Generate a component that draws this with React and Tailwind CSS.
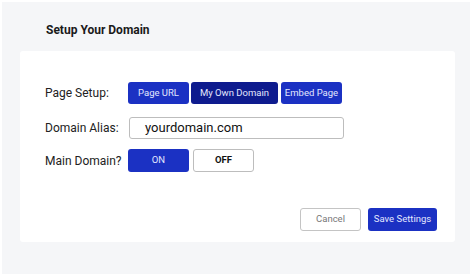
export default function App() {
  return (
    <div className="w-[474px] h-[276px] bg-white p-[2px] font-['Roboto',sans-serif]">
      <div className="w-[468px] h-[272px] bg-[#f5f6f8] pt-[20px] pl-[18px] pr-[15px]">
        <h1 className="pl-[26px] text-[12px] font-bold text-[#1a1a1a] leading-[16px]">Setup Your Domain</h1>
        <div className="mt-[13px] h-[191px] w-[435px] bg-white rounded-[3px] pl-[25px] pr-[18px] pt-[31px] flex flex-col">
          <div className="flex items-center h-[22px]">
            <span className="w-[83px] whitespace-nowrap text-[12px] text-[#222]">Page Setup:</span>
            <div className="flex gap-[2px]">
              <button className="w-[61px] h-[22px] rounded-[3px] bg-[#1b31c3] text-[#e3e7ff] text-[9.5px]">Page URL</button>
              <button className="w-[87px] h-[22px] rounded-[3px] bg-[#0e1b8e] text-[#e3e7ff] text-[9.5px]">My Own Domain</button>
              <button className="ml-[1px] w-[61px] h-[22px] rounded-[3px] bg-[#1b31c3] text-[#e3e7ff] text-[9.5px]">Embed Page</button>
            </div>
          </div>
          <div className="flex items-center h-[22px] mt-[13px]">
            <span className="w-[84px] whitespace-nowrap text-[12px] text-[#222]">Domain Alias:</span>
            <div className="w-[215px] h-[22px] border border-[#bdbdbd] rounded-[3px] pl-[15px] flex items-center text-[13px] text-[#111]">yourdomain.com</div>
          </div>
          <div className="flex items-center h-[23px] mt-[10px]">
            <span className="w-[83px] whitespace-nowrap text-[12px] text-[#222]">Main Domain?</span>
            <button className="w-[61px] h-[23px] rounded-[3px] bg-[#1b31c3] text-[#e3e7ff] text-[9.5px]">ON</button>
            <button className="ml-[4px] w-[61px] h-[23px] rounded-[3px] border border-[#bdbdbd] bg-white text-[#111] text-[9.5px] font-bold">OFF</button>
          </div>
          <div className="flex justify-end gap-[7px] mt-[36px]">
            <button className="w-[61px] h-[23px] rounded-[3px] border border-[#c4c4c4] bg-white text-[#777] text-[9.5px]">Cancel</button>
            <button className="w-[69px] h-[23px] rounded-[3px] bg-[#1b31c3] text-[#e3e7ff] text-[9.5px]">Save Settings</button>
          </div>
        </div>
      </div>
    </div>
  );
}
